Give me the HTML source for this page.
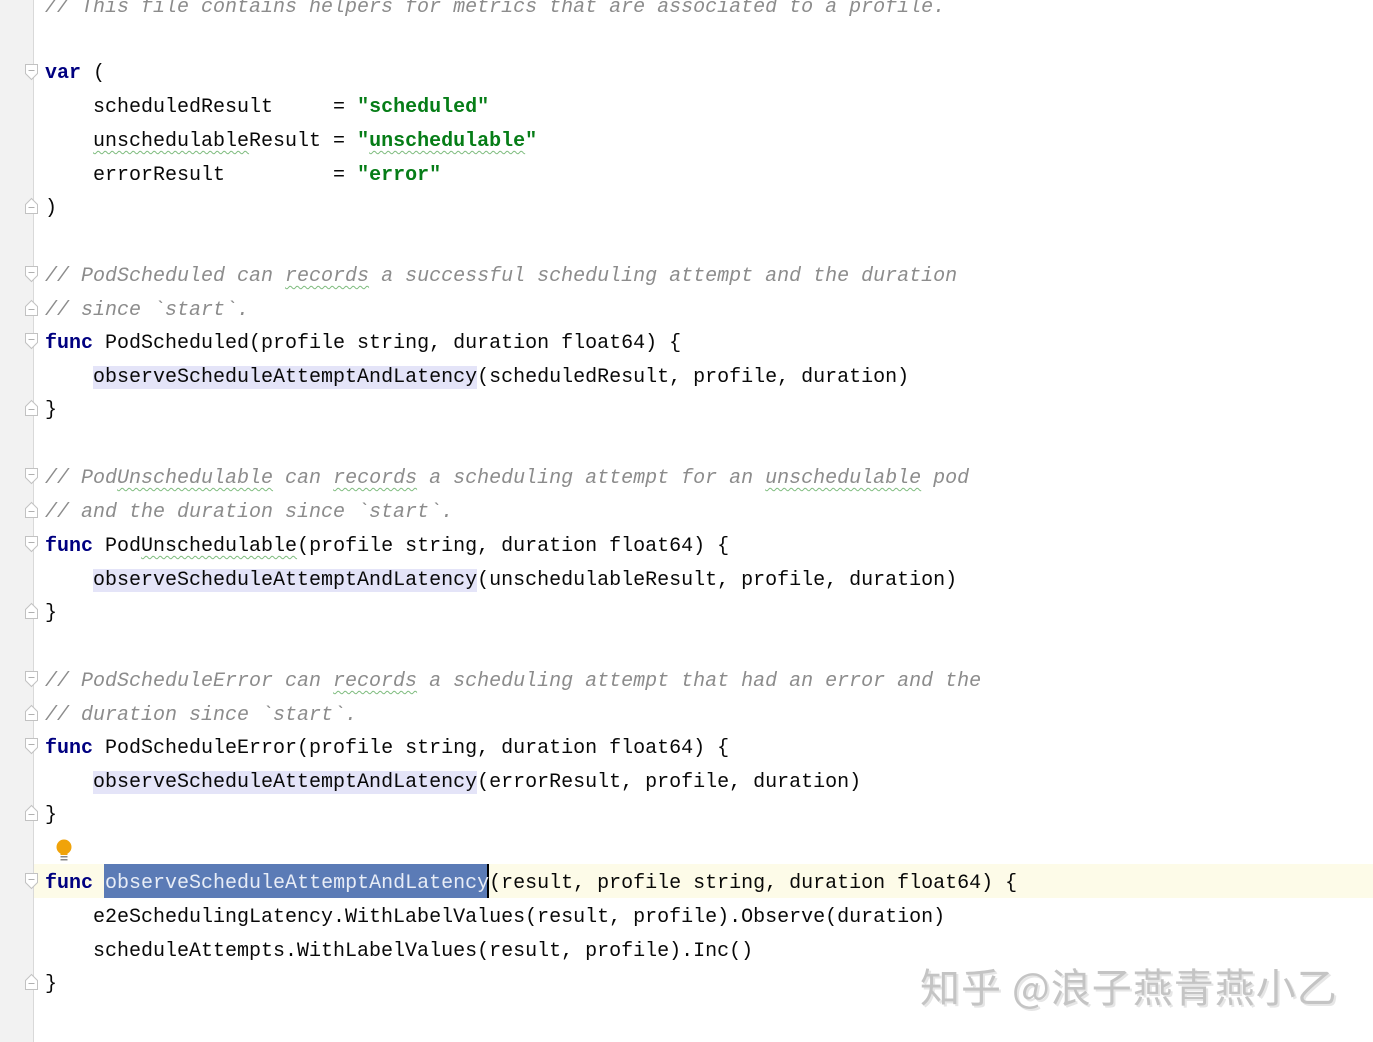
<!DOCTYPE html>
<html><head><meta charset="utf-8"><style>
html,body{margin:0;padding:0;width:1373px;height:1042px;overflow:hidden;background:#fff;}
.g{position:absolute;left:0;top:0;width:33px;height:1042px;background:#f2f2f2;border-right:1px solid #d9d9d9;}
.l{position:absolute;left:45px;height:34px;line-height:34px;font-family:"Liberation Mono",monospace;font-size:20px;color:#080808;white-space:pre;margin-top:3px;}
.k{color:#000080;font-weight:bold;}
.s{color:#067d17;font-weight:bold;}
.c{color:#8c8c8c;font-style:italic;}
.u{background:#e4e4f8;}
.w{text-decoration:underline wavy #7dbb7d;text-decoration-thickness:1px;text-underline-offset:4px;}
.cur{position:absolute;left:34px;right:0;top:864px;height:34px;background:#fdfbe8;}
.f{position:absolute;left:24px;width:15px;height:18px;}
.wm{position:absolute;left:920px;top:956px;font-family:"Noto Sans CJK SC",sans-serif;font-size:40px;color:#c4c4c4;letter-spacing:1px;text-shadow:2px 2px 0 #e6e6e6;}
</style></head><body>
<div class="g"></div>
<div class="cur"></div>
<div style="position:absolute;left:104px;top:864px;width:383px;height:34px;background:#5b7bb6"></div>
<div style="position:absolute;left:487px;top:864px;width:2px;height:34px;background:#000"></div>

<svg width="0" height="0" style="position:absolute">
<defs>
<symbol id="fd" viewBox="0 0 15 18"><path d="M1.5 1.5H13.5V10.5L7.5 16.5L1.5 10.5Z" fill="#fff" stroke="#c2c2c2"/><path d="M4.5 7.5H10.5" stroke="#b0b0b0"/></symbol>
<symbol id="fu" viewBox="0 0 15 18"><path d="M1.5 16.5H13.5V7.5L7.5 1.5L1.5 7.5Z" fill="#fff" stroke="#c2c2c2"/><path d="M4.5 10.5H10.5" stroke="#b0b0b0"/></symbol>
</defs></svg>

<div class="l" style="top:-12px"><span class="c">// This file contains helpers for metrics that are associated to a profile.</span></div>
<div class="l" style="top:54px"><span class="k">var</span> (</div>
<div class="l" style="top:88px">    scheduledResult     = <span class="s">"scheduled"</span></div>
<div class="l" style="top:122px">    <span class="w">unschedulable</span>Result = <span class="s">"<span class="w">unschedulable</span>"</span></div>
<div class="l" style="top:156px">    errorResult         = <span class="s">"error"</span></div>
<div class="l" style="top:189px">)</div>

<div class="l" style="top:257px"><span class="c">// PodScheduled can <span class="w">records</span> a successful scheduling attempt and the duration</span></div>
<div class="l" style="top:291px"><span class="c">// since `start`.</span></div>
<div class="l" style="top:324px"><span class="k">func</span> PodScheduled(profile string, duration float64) {</div>
<div class="l" style="top:358px">    <span class="u">observeScheduleAttemptAndLatency</span>(scheduledResult, profile, duration)</div>
<div class="l" style="top:391px">}</div>

<div class="l" style="top:459px"><span class="c">// Pod<span class="w">Unschedulable</span> can <span class="w">records</span> a scheduling attempt for an <span class="w">unschedulable</span> pod</span></div>
<div class="l" style="top:493px"><span class="c">// and the duration since `start`.</span></div>
<div class="l" style="top:527px"><span class="k">func</span> Pod<span class="w">Unschedulable</span>(profile string, duration float64) {</div>
<div class="l" style="top:561px">    <span class="u">observeScheduleAttemptAndLatency</span>(unschedulableResult, profile, duration)</div>
<div class="l" style="top:594px">}</div>

<div class="l" style="top:662px"><span class="c">// PodScheduleError can <span class="w">records</span> a scheduling attempt that had an error and the</span></div>
<div class="l" style="top:696px"><span class="c">// duration since `start`.</span></div>
<div class="l" style="top:729px"><span class="k">func</span> PodScheduleError(profile string, duration float64) {</div>
<div class="l" style="top:763px">    <span class="u">observeScheduleAttemptAndLatency</span>(errorResult, profile, duration)</div>
<div class="l" style="top:796px">}</div>

<svg style="position:absolute;left:55px;top:838px" width="18" height="24" viewBox="0 0 18 24"><circle cx="9" cy="9" r="7.5" fill="#f0a30a"/><rect x="5.5" y="14" width="7" height="3" fill="#f0a30a"/><rect x="5.5" y="18" width="7" height="1.5" fill="#888"/><rect x="5.5" y="21" width="7" height="1.5" fill="#888"/></svg>

<div class="l" style="top:864px"><span class="k">func</span> <span style="color:#e8edf7">observeScheduleAttemptAndLatency</span>(result, profile string, duration float64) {</div>
<div class="l" style="top:898px">    e2eSchedulingLatency.WithLabelValues(result, profile).Observe(duration)</div>
<div class="l" style="top:932px">    scheduleAttempts.WithLabelValues(result, profile).Inc()</div>
<div class="l" style="top:965px">}</div>

<svg class="f" style="top:63px"><use href="#fd"/></svg>
<svg class="f" style="top:197px"><use href="#fu"/></svg>
<svg class="f" style="top:265px"><use href="#fd"/></svg>
<svg class="f" style="top:299px"><use href="#fu"/></svg>
<svg class="f" style="top:332px"><use href="#fd"/></svg>
<svg class="f" style="top:399px"><use href="#fu"/></svg>
<svg class="f" style="top:467px"><use href="#fd"/></svg>
<svg class="f" style="top:501px"><use href="#fu"/></svg>
<svg class="f" style="top:535px"><use href="#fd"/></svg>
<svg class="f" style="top:602px"><use href="#fu"/></svg>
<svg class="f" style="top:670px"><use href="#fd"/></svg>
<svg class="f" style="top:704px"><use href="#fu"/></svg>
<svg class="f" style="top:737px"><use href="#fd"/></svg>
<svg class="f" style="top:804px"><use href="#fu"/></svg>
<svg class="f" style="top:872px"><use href="#fd"/></svg>
<svg class="f" style="top:973px"><use href="#fu"/></svg>

<div class="wm">知乎 @浪子燕青燕小乙</div>
</body></html>
